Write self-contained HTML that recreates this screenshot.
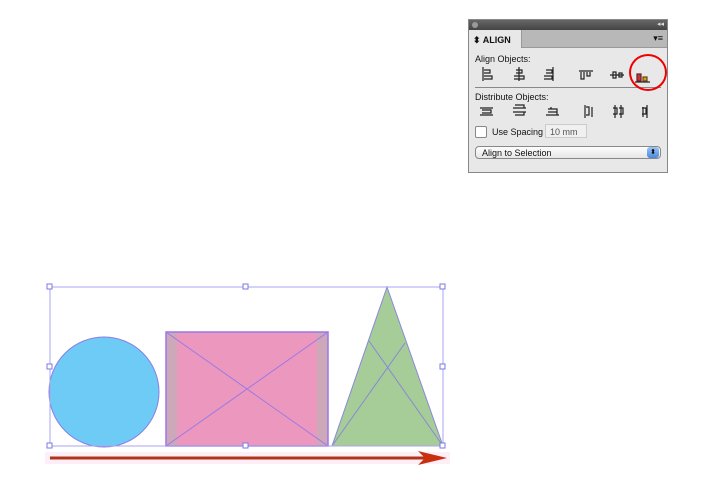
<!DOCTYPE html><html><head><style>
body{margin:0;width:720px;height:490px;background:#fff;position:relative;overflow:hidden;font-family:"Liberation Sans",sans-serif}
.p{position:absolute;left:468px;top:19px;width:200px;height:154px;background:#e8e8e8;border:1px solid #888;box-sizing:border-box}
.t{position:absolute;font-size:9px;color:#111}
</style></head><body>
<div class="p">
<div style="position:absolute;left:0;top:0;width:198px;height:10px;background:linear-gradient(#666,#444)"></div>
<div style="position:absolute;left:3px;top:2px;width:6px;height:6px;border-radius:50%;background:#999"></div>
<div style="position:absolute;right:3px;top:0;color:#ddd;font-size:7px">◂◂</div>
<div style="position:absolute;left:0;top:10px;width:198px;height:17px;background:#b8b8b8;border-bottom:1px solid #999"></div>
<div style="position:absolute;left:0;top:10px;width:52px;height:18px;background:#e8e8e8;border-right:1px solid #999"></div>
<div class="t" style="left:4px;top:15px;font-weight:bold;font-size:9px">⬍ ALIGN</div>
<div class="t" style="right:4px;top:13px;font-size:9px">▾≡</div>
<div class="t" style="left:6px;top:34px">Align Objects:</div>
<div class="t" style="left:6px;top:72px">Distribute Objects:</div>
<div style="position:absolute;left:6px;top:67px;width:186px;height:1px;background:#888"></div>
<svg width="200" height="154" style="position:absolute;left:0;top:0" stroke="#222" fill="none" stroke-width="1.2">
<g transform="translate(0,-19)">
<path d="M14 66v14M15 69h6v3h-6M15 75h8v3h-8"/>
<path d="M50 66v14M47 69h6v3h-6M45 75h10v3h-10"/>
<path d="M84 66v14M77 69h6v3h-6M75 75h8v3h-8"/>
<path d="M110 70h14M112 71v7h3v-7M118 71v4h3v-4"/>
<path d="M141 74h14M144 71h3v6h-3zM150 72h3v4h-3z"/>
<path d="M166 81h15" /><rect x="168" y="73" width="4" height="7" fill="#c33" stroke="#622"/><rect x="174" y="76" width="4" height="4" fill="#d9a400" stroke="#642"/>
<path d="M11 107h13M13 109h9v3h-9M11 114h13"/>
<path d="M44 107h13M46 104h9v3h-9M46 111h9v3h-9M44 111h13"/>
<path d="M77 114h13M79 108h9v3h-9M79 111h9v3h-9M82 106v2"/>
<path d="M116 104v13M117 106h3v8h-3M123 106v10"/>
<path d="M146 104v13M152 104v13M144 107h4v6h-4M150 107h4v6h-4"/>
<path d="M178 104v13M174 106v10M173 107h4v6h-4"/>
</g>
</svg>
<div style="position:absolute;left:160px;top:34px;width:38px;height:37px;border:2px solid #e00;border-radius:50%;box-sizing:border-box"></div>
<div style="position:absolute;left:6px;top:106px;width:10px;height:10px;background:#fff;border:1px solid #888;border-radius:2px"></div>
<div class="t" style="left:23px;top:107px">Use Spacing</div>
<div style="position:absolute;left:76px;top:104px;width:42px;height:14px;background:#f0f0f0;border:1px solid #ccc;font-size:9px;color:#555;line-height:14px;padding-left:4px;box-sizing:border-box">10 mm</div>
<div style="position:absolute;left:6px;top:126px;width:186px;height:13px;background:linear-gradient(#fdfdfd,#e6e6e6);border:1px solid #888;border-radius:4px;box-sizing:border-box"></div>
<div class="t" style="left:13px;top:128px">Align to Selection</div>
<div style="position:absolute;left:178px;top:127px;width:12px;height:11px;background:linear-gradient(#9cc4f4,#4a88dc);border-radius:3px;font-size:7px;color:#000;text-align:center;line-height:11px">⬍</div>
</div>
<svg width="720" height="490" style="position:absolute;left:0;top:0">
<rect x="45" y="452" width="405" height="12" fill="#fdeef8"/>
<circle cx="104" cy="392" r="55" fill="#6dcbf6" stroke="#8a7fe6"/>
<rect x="166" y="332" width="162" height="114" fill="#ec98be" stroke="#9a78e8" stroke-width="1.5"/>
<rect x="167" y="333" width="10" height="112" fill="#cda8b8"/><rect x="317" y="333" width="10" height="112" fill="#cda8b8"/>
<path d="M166 332L328 446M328 332L166 446" stroke="#9a78e8"/>
<path d="M387 287L443 446H332Z" fill="#a6cc98" stroke="#8a88d8"/>
<path d="M332 446L405 343M443 446L369 341" stroke="#8a88d8"/>
<rect x="50" y="287" width="393" height="159" fill="none" stroke="#a9a4f0"/>
<g fill="#fff" stroke="#7a78e8"><rect x="47" y="284" width="5" height="5"/><rect x="243" y="284" width="5" height="5"/><rect x="440" y="284" width="5" height="5"/><rect x="47" y="364" width="5" height="5"/><rect x="440" y="364" width="5" height="5"/><rect x="47" y="443" width="5" height="5"/><rect x="243" y="443" width="5" height="5"/><rect x="440" y="443" width="5" height="5"/></g>
<path d="M50 458H425" stroke="#b03418" stroke-width="3"/>
<path d="M418 451L447 458L418 465L425 458Z" fill="#c8300e"/>
</svg>
</body></html>
